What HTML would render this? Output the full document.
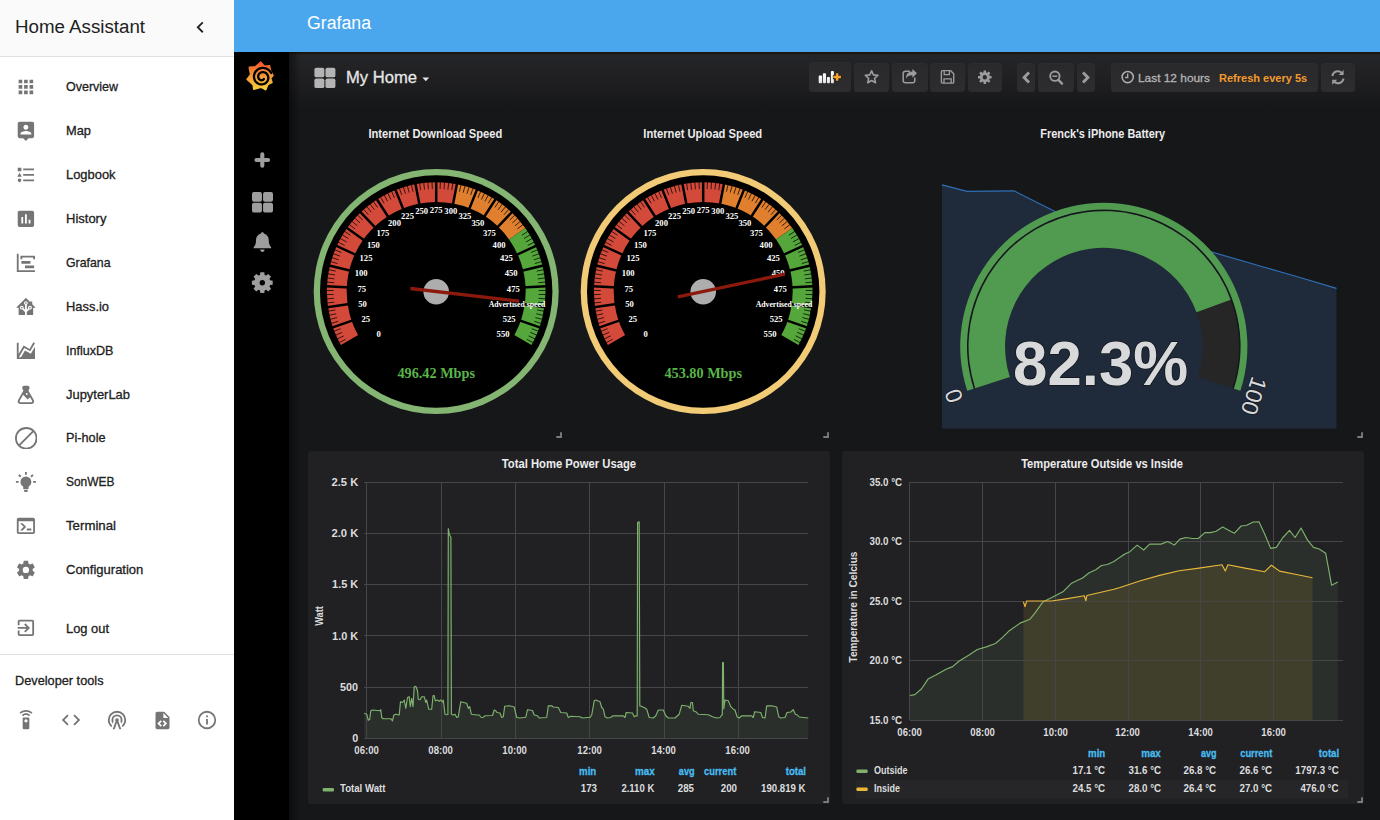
<!DOCTYPE html>
<html lang="en"><head><meta charset="utf-8"><title>Home Assistant - Grafana</title>
<style>
html,body{margin:0;padding:0}
body{width:1380px;height:820px;overflow:hidden;position:relative;background:#161719;font-family:"Liberation Sans",sans-serif}

#sb{position:absolute;left:0;top:0;width:234px;height:820px;background:#fff;overflow:hidden}
#sbh{position:absolute;left:0;top:0;width:234px;height:56px;background:#fafafa;border-bottom:1px solid #e0e0e0}
.mi{position:absolute;display:block}
#sbd{position:absolute;left:0;top:654px;width:234px;height:1px;background:#e0e0e0}

#hatb{position:absolute;left:234px;top:0;width:1146px;height:52px;background:#4aa7ee}
#gsm{position:absolute;left:234px;top:52px;width:55px;height:768px;background:#000}
#gsmsh{position:absolute;left:289px;top:52px;width:12px;height:768px;background:linear-gradient(90deg,rgba(0,0,0,.45),rgba(0,0,0,0))}
#gnav{position:absolute;left:289px;top:52px;width:1091px;height:56px;background:linear-gradient(180deg,#1a140e 0,#1c160f 1.4px,#242528 2.6px,#202022 25px,#161719 56px)}
#chsvg{position:absolute;left:0;top:0}
.t{position:absolute;white-space:nowrap}

#gsvg{position:absolute;left:0;top:0}

.pn{position:absolute;background:#212124;border-radius:3px}
#lrow{position:absolute;left:855.5px;top:780px;width:492.5px;height:17.5px;background:#262628}
#grsvg{position:absolute;left:0;top:0}
</style></head>
<body>
<div id="hatb"></div>
<div id="gnav"></div>
<div id="gsm"></div><div id="gsmsh"></div>
<svg id="chsvg" width="1380" height="820" viewBox="0 0 1380 820">
<defs><linearGradient id="glg" x1="0" y1="0" x2="0" y2="1"><stop offset="0" stop-color="#f0542a"/><stop offset="0.45" stop-color="#f39433"/><stop offset="1" stop-color="#f8d13a"/></linearGradient></defs><polygon points="260.73,61.85 264.39,66.00 269.76,65.51 270.49,70.39 273.17,75.51 270.83,78.20 272.20,82.59 267.90,84.78 265.85,89.90 260.98,87.32 253.66,89.41 252.93,84.78 246.83,79.41 250.49,74.54 249.02,67.22 255.61,66.49" fill="url(#glg)" stroke="url(#glg)" stroke-width="1.2" stroke-linejoin="round"/><path d="M271.26,72.99 L270.59,71.94 L269.79,70.98 L268.89,70.14 L267.90,69.42 L266.84,68.84 L265.72,68.40 L264.57,68.11 L263.40,67.97 L262.23,67.97 L261.08,68.13 L259.97,68.42 L258.91,68.85 L257.93,69.40 L257.03,70.06 L256.23,70.83 L255.54,71.68 L254.97,72.60 L254.53,73.58 L254.21,74.59 L254.03,75.63 L253.98,76.67 L254.06,77.70 L254.26,78.70 L254.59,79.66 L255.03,80.56 L255.58,81.39 L256.22,82.13 L256.94,82.78 L257.73,83.33 L258.57,83.76 L259.45,84.09 L260.35,84.30 L261.26,84.39 L262.17,84.37 L263.06,84.23 L263.91,83.99 L264.71,83.64 L265.46,83.20 L266.13,82.68 L266.73,82.08 L267.24,81.42 L267.65,80.71 L267.97,79.96 L268.19,79.19 L268.31,78.41 L268.32,77.63 L268.24,76.86 L268.07,76.12 L267.80,75.42 L267.46,74.77 L267.04,74.17 L266.55,73.64 L266.01,73.18 L265.43,72.81 L264.81,72.51 L264.16,72.30 L263.51,72.17 L262.86,72.13 L262.21,72.17 L261.59,72.29 L261.00,72.49 L260.44,72.75 L259.94,73.08 L259.49,73.46 L259.09,73.89 L258.77,74.36 L258.51,74.86 L258.32,75.38 L258.20,75.90 L258.14,76.43 L258.16,76.95 L258.24,77.45 L258.39,77.93 L258.59,78.38 L258.84,78.79 L259.13,79.15 L259.46,79.47 L259.82,79.73 L260.20,79.94 L260.60,80.10 L261.01,80.19 L261.41,80.24 L261.80,80.23 L262.18,80.17 L262.54,80.07 L262.88,79.92 L263.18,79.73 L263.45,79.52 L263.68,79.27 L263.87,79.01" fill="none" stroke="#000" stroke-width="2.3" stroke-linecap="round"/>
<path d="M262.3,154.2V165.8M256.5,160H268.1" stroke="#9e9e9e" stroke-width="4.1" stroke-linecap="round" fill="none"/>
<rect x="252.00" y="192.00" width="9.95" height="9.65" rx="1.9" fill="#9e9e9e"/><rect x="252.00" y="202.75" width="9.95" height="9.65" rx="1.9" fill="#9e9e9e"/><rect x="263.05" y="192.00" width="9.95" height="9.65" rx="1.9" fill="#9e9e9e"/><rect x="263.05" y="202.75" width="9.95" height="9.65" rx="1.9" fill="#9e9e9e"/>
<path d="M262.4,232.2c0.9,0,1.5,0.6,1.5,1.4c3,0.8,4.9,3.4,4.9,6.6c0,3.2,0.6,5.4,2.3,6.7v1.4h-17.4v-1.4c1.7,-1.3,2.3,-3.5,2.3,-6.7c0,-3.2,1.9,-5.8,4.9,-6.6c0,-0.8,0.6,-1.4,1.5,-1.4z M260.2,249.6h4.4c0,1.4,-1,2.4,-2.2,2.4c-1.2,0,-2.2,-1,-2.2,-2.4z" fill="#9e9e9e"/>
<path d="M270.06,280.37 L272.71,280.71 L272.71,284.69 L270.06,285.03 L269.43,286.54 L271.07,288.66 L268.26,291.47 L266.14,289.83 L264.63,290.46 L264.29,293.11 L260.31,293.11 L259.97,290.46 L258.46,289.83 L256.34,291.47 L253.53,288.66 L255.17,286.54 L254.54,285.03 L251.89,284.69 L251.89,280.71 L254.54,280.37 L255.17,278.86 L253.53,276.74 L256.34,273.93 L258.46,275.57 L259.97,274.94 L260.31,272.29 L264.29,272.29 L264.63,274.94 L266.14,275.57 L268.26,273.93 L271.07,276.74 L269.43,278.86Z M265.00,282.70 A2.7,2.7 0 1,0 259.60,282.70 A2.7,2.7 0 1,0 265.00,282.70Z" fill="#9e9e9e" fill-rule="evenodd"/>
<rect x="314.40" y="67.70" width="9.95" height="9.65" rx="1.9" fill="#b4b4b4"/><rect x="314.40" y="78.45" width="9.95" height="9.65" rx="1.9" fill="#b4b4b4"/><rect x="325.45" y="67.70" width="9.95" height="9.65" rx="1.9" fill="#b4b4b4"/><rect x="325.45" y="78.45" width="9.95" height="9.65" rx="1.9" fill="#b4b4b4"/>
<path d="M422.4,77.6h6.8l-3.4,3.6z" fill="#e3e3e3"/>
<defs><linearGradient id="btg" x1="0" y1="0" x2="0" y2="1"><stop offset="0" stop-color="#29292c"/><stop offset="1" stop-color="#2d2d30"/></linearGradient></defs>
<rect x="809.5" y="62.5" width="41" height="29" rx="2.5" fill="url(#btg)" stroke="#2c2c2f" stroke-width="1"/>
<rect x="854.5" y="63.5" width="34" height="28" rx="2.5" fill="url(#btg)" stroke="#2c2c2f" stroke-width="1"/>
<rect x="892.5" y="63.5" width="35" height="28" rx="2.5" fill="url(#btg)" stroke="#2c2c2f" stroke-width="1"/>
<rect x="930.5" y="63.5" width="34" height="28" rx="2.5" fill="url(#btg)" stroke="#2c2c2f" stroke-width="1"/>
<rect x="968.5" y="63.5" width="33" height="28" rx="2.5" fill="url(#btg)" stroke="#2c2c2f" stroke-width="1"/>
<rect x="1017.5" y="63.5" width="17" height="28" rx="2.5" fill="url(#btg)" stroke="#2c2c2f" stroke-width="1"/>
<rect x="1038.5" y="63.5" width="35" height="28" rx="2.5" fill="url(#btg)" stroke="#2c2c2f" stroke-width="1"/>
<rect x="1077.5" y="63.5" width="17" height="28" rx="2.5" fill="url(#btg)" stroke="#2c2c2f" stroke-width="1"/>
<rect x="1111.5" y="63.5" width="206" height="28" rx="2.5" fill="url(#btg)" stroke="#2c2c2f" stroke-width="1"/>
<rect x="1321.5" y="63.5" width="33" height="28" rx="2.5" fill="url(#btg)" stroke="#2c2c2f" stroke-width="1"/>
<defs><linearGradient id="barg" x1="0" y1="0" x2="0" y2="1"><stop offset="0" stop-color="#fff"/><stop offset="1" stop-color="#e2e2e2"/></linearGradient></defs>
<rect x="818.7" y="75.6" width="3.4" height="7.60" rx="0.9" fill="url(#barg)"/>
<rect x="822.9" y="73.2" width="3.1" height="10.00" rx="0.9" fill="url(#barg)"/>
<rect x="826.9" y="77" width="3.0" height="6.20" rx="0.9" fill="url(#barg)"/>
<rect x="830.9" y="71.1" width="3.0" height="12.10" rx="0.9" fill="url(#barg)"/>
<path d="M837.1,72.9V81.2M832.9,77.05H841.3" stroke="#1e1e20" stroke-width="4.2" fill="none"/>
<path d="M837.1,73.3V80.8M833.3,77.05H840.9" stroke="#f5a32a" stroke-width="2.5" fill="none"/>
<polygon points="871.60,70.80 873.42,74.89 877.88,75.36 874.55,78.36 875.48,82.74 871.60,80.50 867.72,82.74 868.65,78.36 865.32,75.36 869.78,74.89" fill="none" stroke="#9c9c9c" stroke-width="1.6" stroke-linejoin="round"/>
<path d="M909.5,71.2h-4a2.3,2.3 0 0,0 -2.3,2.3v7a2.3,2.3 0 0,0 2.3,2.3h7a2.3,2.3 0 0,0 2.3,-2.3v-2.6" fill="none" stroke="#9c9c9c" stroke-width="1.5" stroke-linecap="round"/>
<path d="M917,73.3l-4.6,-4.4v2.6c-4,0.1,-6.3,2.3,-6.5,7.3c1.4,-2.6,3.3,-3.5,6.5,-3.5v2.5z" fill="#9c9c9c"/>
<path d="M942.2,70.6h8.3l3.2,3.2v8.5a0.8,0.8 0 0,1 -0.8,0.8h-10.7a0.8,0.8 0 0,1 -0.8,-0.8v-10.9a0.8,0.8 0 0,1 0.8,-0.8z" fill="none" stroke="#9c9c9c" stroke-width="1.4" stroke-linejoin="round"/>
<path d="M944.2,70.8v3.9h5.2v-3.9M944,83v-4.2h7.2v4.2" fill="none" stroke="#9c9c9c" stroke-width="1.3"/>
<path d="M989.62,75.88 L991.60,76.01 L991.60,78.39 L989.62,78.52 L989.15,79.67 L990.45,81.17 L988.77,82.85 L987.27,81.55 L986.12,82.02 L985.99,84.00 L983.61,84.00 L983.48,82.02 L982.33,81.55 L980.83,82.85 L979.15,81.17 L980.45,79.67 L979.98,78.52 L978.00,78.39 L978.00,76.01 L979.98,75.88 L980.45,74.73 L979.15,73.23 L980.83,71.55 L982.33,72.85 L983.48,72.38 L983.61,70.40 L985.99,70.40 L986.12,72.38 L987.27,72.85 L988.77,71.55 L990.45,73.23 L989.15,74.73Z M987.00,77.20 A2.2,2.2 0 1,0 982.60,77.20 A2.2,2.2 0 1,0 987.00,77.20Z" fill="#9c9c9c" fill-rule="evenodd"/>
<path d="M1029,72.6l-4.9,5l4.9,5" fill="none" stroke="#9c9c9c" stroke-width="2.9"/>
<path d="M1083,72.6l4.9,5l-4.9,5" fill="none" stroke="#9c9c9c" stroke-width="2.9"/>
<circle cx="1054.9" cy="76.2" r="4.7" fill="none" stroke="#9c9c9c" stroke-width="1.9"/><path d="M1058.4,79.9l3.6,3.7" stroke="#9c9c9c" stroke-width="2.4" stroke-linecap="round"/><path d="M1052.5,76.2h4.8" stroke="#9c9c9c" stroke-width="1.5"/>
<circle cx="1127.7" cy="77.1" r="5.6" fill="none" stroke="#b0b0b0" stroke-width="1.5"/><path d="M1127.7,73.6v3.9h-2.6" fill="none" stroke="#b0b0b0" stroke-width="1.3"/>
<path d="M1332.3,76a5.6,5.6 0 0,1 9.6,-2.9" fill="none" stroke="#9c9c9c" stroke-width="2"/><path d="M1343.6,69.9v5h-5z" fill="#9c9c9c"/>
<path d="M1343.5,78.6a5.6,5.6 0 0,1 -9.6,2.9" fill="none" stroke="#9c9c9c" stroke-width="2"/><path d="M1332.2,84.7v-5h5z" fill="#9c9c9c"/>
</svg>
<div class="t" style="left:307.30px;top:10.80px;font-size:17.6px;line-height:25px;color:#fff;transform-origin:0 50%;transform:scaleX(1.0065);">Grafana</div>
<div class="t" style="left:345.80px;top:64.90px;font-size:17.4px;line-height:24px;color:#e6e6e6;transform-origin:0 50%;transform:scaleX(0.9538);-webkit-text-stroke:0.3px #e6e6e6;">My Home</div>
<div class="t" style="left:1137.60px;top:69.90px;font-size:11.8px;line-height:17px;color:#b4b4b4;transform-origin:0 50%;transform:scaleX(1.0070);-webkit-text-stroke:0.3px #b4b4b4;">Last 12 hours</div>
<div class="t" style="left:1218.80px;top:69.90px;font-size:11.8px;line-height:17px;color:#f39a2c;font-weight:700;transform-origin:0 50%;transform:scaleX(0.9338);">Refresh every 5s</div>
<div class="pn" style="left:308px;top:451px;width:522px;height:353px"></div><div class="pn" style="left:842px;top:451px;width:522px;height:353px"></div><div id="lrow"></div>
<svg id="gsvg" width="1380" height="820" viewBox="0 0 1380 820">
<circle cx="436.2" cy="291.5" r="122.5" fill="#85b572"/>
<circle cx="436.2" cy="291.5" r="116.2" fill="#000"/>
<path d="M341.54,346.15A109.3,109.3 0 0,1 456.89,184.18L453.14,203.62A89.5,89.5 0 0,0 358.69,336.25Z" fill="#d44a3a"/>
<path d="M456.89,184.18A109.3,109.3 0 0,1 525.23,228.10L509.10,239.58A89.5,89.5 0 0,0 453.14,203.62Z" fill="#e0802f"/>
<path d="M525.23,228.10A109.3,109.3 0 0,1 530.86,346.15L513.71,336.25A89.5,89.5 0 0,0 509.10,239.58Z" fill="#55a73b"/>
<path d="M339.27,342.65L345.55,339.33M337.39,338.92L343.79,335.85M335.66,335.12L342.17,332.30M334.07,331.26L340.68,328.69M331.34,323.38L338.13,321.31M330.20,319.36L337.07,317.56M329.22,315.31L336.15,313.76M328.39,311.22L335.37,309.94M327.20,302.96L334.26,302.21M326.84,298.80L333.93,298.33M326.64,294.63L333.74,294.43M326.60,290.46L333.70,290.52M327.00,282.12L334.08,282.73M327.44,277.97L334.48,278.85M328.03,273.84L335.04,274.98M328.78,269.73L335.74,271.14M330.75,261.62L337.58,263.56M331.96,257.63L338.72,259.83M333.33,253.69L339.99,256.14M334.84,249.80L341.41,252.50M338.31,242.21L344.65,245.40M340.26,238.52L346.47,241.95M342.34,234.90L348.42,238.57M344.57,231.37L350.50,235.27M349.41,224.57L355.03,228.91M352.02,221.32L357.47,225.86M354.75,218.16L360.03,222.91M357.60,215.12L362.69,220.06M363.64,209.36L368.34,214.68M366.82,206.65L371.32,212.15M370.10,204.07L374.38,209.74M373.48,201.62L377.54,207.44M380.50,197.11L384.11,203.22M384.13,195.06L387.51,201.31M387.84,193.15L390.97,199.52M391.62,191.38L394.51,197.86M399.37,188.27L401.75,194.96M403.33,186.95L405.46,193.72M407.33,185.77L409.20,192.62M411.38,184.75L412.98,191.66M419.57,183.17L420.65,190.19M423.71,182.61L424.52,189.67M427.86,182.22L428.40,189.30M432.03,181.98L432.30,189.07M440.37,181.98L440.10,189.07M444.54,182.22L444.00,189.30M448.69,182.61L447.88,189.67M452.83,183.17L451.75,190.19M461.02,184.75L459.42,191.66M465.07,185.77L463.20,192.62M469.07,186.95L466.94,193.72M473.03,188.27L470.65,194.96M480.78,191.38L477.89,197.86M484.56,193.15L481.43,199.52M488.27,195.06L484.89,201.31M491.90,197.11L488.29,203.22M498.92,201.62L494.86,207.44M502.30,204.07L498.02,209.74M505.58,206.65L501.08,212.15M508.76,209.36L504.06,214.68M514.80,215.12L509.71,220.06M517.65,218.16L512.37,222.91M520.38,221.32L514.93,225.86M522.99,224.57L517.37,228.91M527.83,231.37L521.90,235.27M530.06,234.90L523.98,238.57M532.14,238.52L525.93,241.95M534.09,242.21L527.75,245.40M537.56,249.80L530.99,252.50M539.07,253.69L532.41,256.14M540.44,257.63L533.68,259.83M541.65,261.62L534.82,263.56M543.62,269.73L536.66,271.14M544.37,273.84L537.36,274.98M544.96,277.97L537.92,278.85M545.40,282.12L538.32,282.73M545.80,290.46L538.70,290.52M545.76,294.63L538.66,294.43M545.56,298.80L538.47,298.33M545.20,302.96L538.14,302.21M544.01,311.22L537.03,309.94M543.18,315.31L536.25,313.76M542.20,319.36L535.33,317.56M541.06,323.38L534.27,321.31M538.33,331.26L531.72,328.69M536.74,335.12L530.23,332.30M535.01,338.92L528.61,335.85M533.13,342.65L526.85,339.33" stroke="#000" stroke-opacity="0.75" stroke-width="1" fill="none"/>
<path d="M340.68,346.65L361.81,334.45M331.97,327.58L355.02,319.60M327.02,307.20L351.17,303.72M326.02,286.25L350.40,287.41M329.01,265.50L352.72,271.25M335.87,245.68L358.06,255.82M346.35,227.52L366.23,241.67M360.08,211.67L376.92,229.33M376.57,198.71L389.76,219.24M395.21,189.10L404.27,211.75M415.33,183.19L419.94,207.15M436.20,181.20L436.20,205.60M457.07,183.19L452.46,207.15M477.19,189.10L468.13,211.75M495.83,198.71L482.64,219.24M512.32,211.67L495.48,229.33M536.53,245.68L514.34,255.82M543.39,265.50L519.68,271.25M546.38,286.25L522.00,287.41M545.38,307.20L521.23,303.72M540.43,327.58L517.38,319.60M531.72,346.65L510.59,334.45" stroke="#000" stroke-width="2.5" fill="none"/>
<g font-family="Liberation Serif, serif" font-weight="700" font-size="8.6" fill="#fff" text-anchor="middle">
<text x="378.61" y="336.75">0</text>
<text x="365.80" y="322.48">25</text>
<text x="362.46" y="307.24">50</text>
<text x="361.78" y="291.57">75</text>
<text x="361.21" y="276.05">100</text>
<text x="366.01" y="261.23">125</text>
<text x="373.34" y="247.65">150</text>
<text x="382.95" y="235.79">175</text>
<text x="394.48" y="226.10">200</text>
<text x="407.52" y="218.91">225</text>
<text x="421.60" y="214.49">250</text>
<text x="436.20" y="213.00">275</text>
<text x="450.80" y="214.49">300</text>
<text x="464.88" y="218.91">325</text>
<text x="477.92" y="226.10">350</text>
<text x="489.45" y="235.79">375</text>
<text x="499.06" y="247.65">400</text>
<text x="506.39" y="261.23">425</text>
<text x="511.19" y="276.05">450</text>
<text x="513.28" y="291.57">475</text>
<text x="516.97" y="307.24" font-size="8.3" textLength="56.6" lengthAdjust="spacingAndGlyphs">Advertised speed</text>
<text x="509.12" y="322.48">525</text>
<text x="503.03" y="336.75">550</text>
</g>
<text x="436.2" y="378.1" font-family="Liberation Serif, serif" font-weight="700" font-size="15.6" fill="#5ab54a" text-anchor="middle" textLength="77.5" lengthAdjust="spacingAndGlyphs">496.42 Mbps</text>
<circle cx="436.2" cy="291.8" r="12.8" fill="#adadad"/>
<path d="M410.37,288.50L519.14,301.13" stroke="#8c1a0c" stroke-width="3.3" fill="none"/>
<circle cx="703.2" cy="291.5" r="122.5" fill="#f2cb76"/>
<circle cx="703.2" cy="291.5" r="116.2" fill="#000"/>
<path d="M608.54,346.15A109.3,109.3 0 0,1 723.89,184.18L720.14,203.62A89.5,89.5 0 0,0 625.69,336.25Z" fill="#d44a3a"/>
<path d="M723.89,184.18A109.3,109.3 0 0,1 792.23,228.10L776.10,239.58A89.5,89.5 0 0,0 720.14,203.62Z" fill="#e0802f"/>
<path d="M792.23,228.10A109.3,109.3 0 0,1 797.86,346.15L780.71,336.25A89.5,89.5 0 0,0 776.10,239.58Z" fill="#55a73b"/>
<path d="M606.27,342.65L612.55,339.33M604.39,338.92L610.79,335.85M602.66,335.12L609.17,332.30M601.07,331.26L607.68,328.69M598.34,323.38L605.13,321.31M597.20,319.36L604.07,317.56M596.22,315.31L603.15,313.76M595.39,311.22L602.37,309.94M594.20,302.96L601.26,302.21M593.84,298.80L600.93,298.33M593.64,294.63L600.74,294.43M593.60,290.46L600.70,290.52M594.00,282.12L601.08,282.73M594.44,277.97L601.48,278.85M595.03,273.84L602.04,274.98M595.78,269.73L602.74,271.14M597.75,261.62L604.58,263.56M598.96,257.63L605.72,259.83M600.33,253.69L606.99,256.14M601.84,249.80L608.41,252.50M605.31,242.21L611.65,245.40M607.26,238.52L613.47,241.95M609.34,234.90L615.42,238.57M611.57,231.37L617.50,235.27M616.41,224.57L622.03,228.91M619.02,221.32L624.47,225.86M621.75,218.16L627.03,222.91M624.60,215.12L629.69,220.06M630.64,209.36L635.34,214.68M633.82,206.65L638.32,212.15M637.10,204.07L641.38,209.74M640.48,201.62L644.54,207.44M647.50,197.11L651.11,203.22M651.13,195.06L654.51,201.31M654.84,193.15L657.97,199.52M658.62,191.38L661.51,197.86M666.37,188.27L668.75,194.96M670.33,186.95L672.46,193.72M674.33,185.77L676.20,192.62M678.38,184.75L679.98,191.66M686.57,183.17L687.65,190.19M690.71,182.61L691.52,189.67M694.86,182.22L695.40,189.30M699.03,181.98L699.30,189.07M707.37,181.98L707.10,189.07M711.54,182.22L711.00,189.30M715.69,182.61L714.88,189.67M719.83,183.17L718.75,190.19M728.02,184.75L726.42,191.66M732.07,185.77L730.20,192.62M736.07,186.95L733.94,193.72M740.03,188.27L737.65,194.96M747.78,191.38L744.89,197.86M751.56,193.15L748.43,199.52M755.27,195.06L751.89,201.31M758.90,197.11L755.29,203.22M765.92,201.62L761.86,207.44M769.30,204.07L765.02,209.74M772.58,206.65L768.08,212.15M775.76,209.36L771.06,214.68M781.80,215.12L776.71,220.06M784.65,218.16L779.37,222.91M787.38,221.32L781.93,225.86M789.99,224.57L784.37,228.91M794.83,231.37L788.90,235.27M797.06,234.90L790.98,238.57M799.14,238.52L792.93,241.95M801.09,242.21L794.75,245.40M804.56,249.80L797.99,252.50M806.07,253.69L799.41,256.14M807.44,257.63L800.68,259.83M808.65,261.62L801.82,263.56M810.62,269.73L803.66,271.14M811.37,273.84L804.36,274.98M811.96,277.97L804.92,278.85M812.40,282.12L805.32,282.73M812.80,290.46L805.70,290.52M812.76,294.63L805.66,294.43M812.56,298.80L805.47,298.33M812.20,302.96L805.14,302.21M811.01,311.22L804.03,309.94M810.18,315.31L803.25,313.76M809.20,319.36L802.33,317.56M808.06,323.38L801.27,321.31M805.33,331.26L798.72,328.69M803.74,335.12L797.23,332.30M802.01,338.92L795.61,335.85M800.13,342.65L793.85,339.33" stroke="#000" stroke-opacity="0.75" stroke-width="1" fill="none"/>
<path d="M607.68,346.65L628.81,334.45M598.97,327.58L622.02,319.60M594.02,307.20L618.17,303.72M593.02,286.25L617.40,287.41M596.01,265.50L619.72,271.25M602.87,245.68L625.06,255.82M613.35,227.52L633.23,241.67M627.08,211.67L643.92,229.33M643.57,198.71L656.76,219.24M662.21,189.10L671.27,211.75M682.33,183.19L686.94,207.15M703.20,181.20L703.20,205.60M724.07,183.19L719.46,207.15M744.19,189.10L735.13,211.75M762.83,198.71L749.64,219.24M779.32,211.67L762.48,229.33M803.53,245.68L781.34,255.82M810.39,265.50L786.68,271.25M813.38,286.25L789.00,287.41M812.38,307.20L788.23,303.72M807.43,327.58L784.38,319.60M798.72,346.65L777.59,334.45" stroke="#000" stroke-width="2.5" fill="none"/>
<g font-family="Liberation Serif, serif" font-weight="700" font-size="8.6" fill="#fff" text-anchor="middle">
<text x="645.61" y="336.75">0</text>
<text x="632.80" y="322.48">25</text>
<text x="629.46" y="307.24">50</text>
<text x="628.78" y="291.57">75</text>
<text x="628.21" y="276.05">100</text>
<text x="633.01" y="261.23">125</text>
<text x="640.34" y="247.65">150</text>
<text x="649.95" y="235.79">175</text>
<text x="661.48" y="226.10">200</text>
<text x="674.52" y="218.91">225</text>
<text x="688.60" y="214.49">250</text>
<text x="703.20" y="213.00">275</text>
<text x="717.80" y="214.49">300</text>
<text x="731.88" y="218.91">325</text>
<text x="744.92" y="226.10">350</text>
<text x="756.45" y="235.79">375</text>
<text x="766.06" y="247.65">400</text>
<text x="773.39" y="261.23">425</text>
<text x="778.19" y="276.05">450</text>
<text x="780.28" y="291.57">475</text>
<text x="783.97" y="307.24" font-size="8.3" textLength="56.6" lengthAdjust="spacingAndGlyphs">Advertised speed</text>
<text x="776.12" y="322.48">525</text>
<text x="770.03" y="336.75">550</text>
</g>
<text x="703.2" y="378.1" font-family="Liberation Serif, serif" font-weight="700" font-size="15.6" fill="#5ab54a" text-anchor="middle" textLength="77.5" lengthAdjust="spacingAndGlyphs">453.80 Mbps</text>
<circle cx="703.2" cy="291.8" r="12.8" fill="#adadad"/>
<path d="M677.77,296.90L784.88,274.17" stroke="#8c1a0c" stroke-width="3.3" fill="none"/>
<path d="M942,428.5L942.0,184.8 L967.0,191.3 L1014.0,190.8 L1055.0,211.5 L1120.0,228.0 L1198.0,248.0 L1260.0,266.0 L1300.0,277.5 L1336.5,288.3L1336.5,428.5Z" fill="#1f2a3a"/>
<path d="M942.0,184.8 L967.0,191.3 L1014.0,190.8 L1055.0,211.5 L1120.0,228.0 L1198.0,248.0 L1260.0,266.0 L1300.0,277.5 L1336.5,288.3" fill="none" stroke="#2f6fb5" stroke-width="1.2"/>
<path d="M973.51,388.74A137.0,137.0 0 1,1 1234.09,388.74L1232.19,388.12A135.0,135.0 0 1,0 975.41,388.12Z" fill="#15171c"/>
<path d="M967.23,390.77A143.6,143.6 0 1,1 1240.37,390.77L1233.90,388.67A136.8,136.8 0 1,0 973.70,388.67Z" fill="#519b51"/>
<path d="M975.22,388.18A135.2,135.2 0 1,1 1232.38,388.18L1197.76,376.93A98.8,98.8 0 1,0 1009.84,376.93Z" fill="#262626"/>
<path d="M975.22,388.18A135.2,135.2 0 0,1 1230.66,299.64L1196.50,312.23A98.8,98.8 0 0,0 1009.84,376.93Z" fill="#519b51"/>
<text x="1100.6" y="385.2" font-family="Liberation Sans, sans-serif" font-weight="700" font-size="62.5" fill="#d8d9da" stroke="#15181d" stroke-width="1.6" paint-order="stroke" text-anchor="middle" textLength="175" lengthAdjust="spacingAndGlyphs">82.3%</text>
<text transform="translate(953.44,396.06) rotate(252.0)" x="0" y="8.2" font-family="Liberation Sans, sans-serif" font-size="23" fill="#d8d9da" stroke="#15181d" stroke-width="1.4" paint-order="stroke" text-anchor="middle">0</text>
<text transform="translate(1254.16,396.06) rotate(468.0)" x="0" y="8.2" font-family="Liberation Sans, sans-serif" font-size="23" fill="#d8d9da" stroke="#15181d" stroke-width="1.4" paint-order="stroke" text-anchor="middle">100</text>
<path d="M556.3,437H561V432.2" fill="none" stroke="#7b7b7d" stroke-width="1.9"/>
<path d="M823.3,437H828V432.2" fill="none" stroke="#7b7b7d" stroke-width="1.9"/>
<path d="M1357.3,437H1362V432.2" fill="none" stroke="#7b7b7d" stroke-width="1.9"/>
<path d="M823.3,802H828V797.2" fill="none" stroke="#7b7b7d" stroke-width="1.9"/>
<path d="M1357.3,802H1362V797.2" fill="none" stroke="#7b7b7d" stroke-width="1.9"/>
</svg><div class="t" style="left:361.30px;top:125.50px;font-size:12.4px;line-height:17px;color:#ececec;font-weight:700;transform-origin:50% 50%;transform:scaleX(0.9005);">Internet Download Speed</div><div class="t" style="left:636.71px;top:125.50px;font-size:12.4px;line-height:17px;color:#ececec;font-weight:700;transform-origin:50% 50%;transform:scaleX(0.9044);">Internet Upload Speed</div><div class="t" style="left:1032.27px;top:125.50px;font-size:12.4px;line-height:17px;color:#ececec;font-weight:700;transform-origin:50% 50%;transform:scaleX(0.8837);">Frenck's iPhone Battery</div>
<svg id="grsvg" width="1380" height="820" viewBox="0 0 1380 820">
<path d="M364.2,713.3 L366.7,714.2 L368.3,720.3 L369.7,719.2 L370.8,710.8 L372.5,710.0 L380.0,710.8 L380.8,709.7 L381.7,717.5 L383.3,718.7 L390.8,718.7 L392.5,720.8 L393.8,715.0 L395.8,714.2 L399.2,715.0 L400.5,701.7 L402.5,702.5 L404.2,700.0 L405.8,708.3 L407.5,697.5 L409.2,696.7 L410.3,706.7 L411.7,698.3 L413.0,706.7 L414.2,686.7 L415.8,686.3 L417.5,690.8 L418.3,699.2 L420.0,699.7 L421.7,696.7 L424.2,696.7 L425.8,702.5 L426.7,700.0 L428.7,709.2 L431.7,709.2 L433.0,695.8 L434.2,695.5 L435.3,700.8 L437.5,700.0 L439.2,701.3 L440.8,700.0 L442.5,702.0 L443.3,700.0 L445.0,714.2 L446.7,714.7 L447.9,714.5 L448.3,528.6 L449.4,534.5 L450.9,537.2 L451.4,714.0 L451.3,714.2 L453.3,715.0 L455.0,714.2 L456.7,717.5 L458.3,716.7 L460.8,701.7 L466.7,703.3 L468.3,708.3 L469.7,706.7 L471.3,714.2 L476.7,715.0 L479.2,715.0 L481.3,717.5 L483.3,717.2 L485.0,715.8 L492.5,715.5 L494.2,710.0 L495.8,710.8 L497.0,712.5 L500.0,713.0 L501.7,717.5 L503.3,716.7 L504.7,706.3 L509.2,705.8 L514.2,707.0 L516.7,717.5 L520.0,718.0 L525.8,717.2 L527.5,709.7 L532.5,710.5 L534.2,715.0 L537.5,715.8 L539.2,718.0 L546.7,717.5 L548.3,705.8 L551.7,705.8 L553.3,707.0 L558.3,707.5 L560.8,712.5 L566.7,713.0 L568.3,717.5 L570.8,716.3 L580.0,716.7 L582.5,718.0 L590.0,717.2 L590.0,717.5 L591.7,715.0 L594.2,700.8 L595.8,700.0 L600.0,701.7 L601.7,707.5 L603.3,709.2 L605.0,716.7 L607.5,718.0 L610.8,717.5 L612.5,715.8 L623.3,715.8 L625.0,717.5 L626.2,712.5 L632.5,713.0 L634.2,716.7 L635.8,715.8 L637.2,716.0 L637.6,522.5 L639.2,521.8 L639.8,706.0 L640.0,705.8 L644.2,707.5 L646.7,709.2 L649.2,717.5 L653.3,718.0 L655.8,715.8 L658.3,710.0 L663.3,710.0 L665.8,715.8 L668.3,718.0 L675.0,718.0 L679.2,714.2 L681.7,705.3 L688.3,706.3 L690.0,708.3 L690.8,702.5 L692.5,702.5 L693.3,710.8 L695.8,711.7 L698.3,714.2 L708.3,714.7 L712.5,716.7 L716.7,718.0 L720.0,717.5 L721.7,715.0 L722.3,715.0 L722.6,662.6 L723.4,662.6 L723.8,709.0 L725.0,700.0 L728.3,700.8 L730.8,706.7 L733.3,709.2 L735.0,710.0 L737.0,716.7 L739.2,718.0 L741.7,715.8 L751.7,715.8 L753.3,717.5 L754.7,711.7 L760.8,712.5 L762.5,717.5 L765.0,718.0 L766.7,705.8 L771.7,705.8 L776.7,707.0 L778.7,716.7 L780.8,718.0 L785.0,717.5 L787.0,712.5 L790.8,712.0 L793.3,709.7 L795.3,714.2 L797.5,715.0 L799.2,717.0 L803.3,717.5 L808.3,718.0L808.3,738.4L364.2,738.4Z" fill="#7eb26d" fill-opacity="0.1"/>
<path d="M363.8,482.0H808.4M363.8,533.3H808.4M363.8,584.6H808.4M363.8,635.8H808.4M363.8,687.1H808.4M363.8,738.4H808.4M366.9,482.0V738.4M441.2,482.0V738.4M515.5,482.0V738.4M589.8,482.0V738.4M664.1,482.0V738.4M738.4,482.0V738.4" stroke="#464648" stroke-width="1" fill="none" shape-rendering="crispEdges"/>
<path d="M364.2,713.3 L366.7,714.2 L368.3,720.3 L369.7,719.2 L370.8,710.8 L372.5,710.0 L380.0,710.8 L380.8,709.7 L381.7,717.5 L383.3,718.7 L390.8,718.7 L392.5,720.8 L393.8,715.0 L395.8,714.2 L399.2,715.0 L400.5,701.7 L402.5,702.5 L404.2,700.0 L405.8,708.3 L407.5,697.5 L409.2,696.7 L410.3,706.7 L411.7,698.3 L413.0,706.7 L414.2,686.7 L415.8,686.3 L417.5,690.8 L418.3,699.2 L420.0,699.7 L421.7,696.7 L424.2,696.7 L425.8,702.5 L426.7,700.0 L428.7,709.2 L431.7,709.2 L433.0,695.8 L434.2,695.5 L435.3,700.8 L437.5,700.0 L439.2,701.3 L440.8,700.0 L442.5,702.0 L443.3,700.0 L445.0,714.2 L446.7,714.7 L447.9,714.5 L448.3,528.6 L449.4,534.5 L450.9,537.2 L451.4,714.0 L451.3,714.2 L453.3,715.0 L455.0,714.2 L456.7,717.5 L458.3,716.7 L460.8,701.7 L466.7,703.3 L468.3,708.3 L469.7,706.7 L471.3,714.2 L476.7,715.0 L479.2,715.0 L481.3,717.5 L483.3,717.2 L485.0,715.8 L492.5,715.5 L494.2,710.0 L495.8,710.8 L497.0,712.5 L500.0,713.0 L501.7,717.5 L503.3,716.7 L504.7,706.3 L509.2,705.8 L514.2,707.0 L516.7,717.5 L520.0,718.0 L525.8,717.2 L527.5,709.7 L532.5,710.5 L534.2,715.0 L537.5,715.8 L539.2,718.0 L546.7,717.5 L548.3,705.8 L551.7,705.8 L553.3,707.0 L558.3,707.5 L560.8,712.5 L566.7,713.0 L568.3,717.5 L570.8,716.3 L580.0,716.7 L582.5,718.0 L590.0,717.2 L590.0,717.5 L591.7,715.0 L594.2,700.8 L595.8,700.0 L600.0,701.7 L601.7,707.5 L603.3,709.2 L605.0,716.7 L607.5,718.0 L610.8,717.5 L612.5,715.8 L623.3,715.8 L625.0,717.5 L626.2,712.5 L632.5,713.0 L634.2,716.7 L635.8,715.8 L637.2,716.0 L637.6,522.5 L639.2,521.8 L639.8,706.0 L640.0,705.8 L644.2,707.5 L646.7,709.2 L649.2,717.5 L653.3,718.0 L655.8,715.8 L658.3,710.0 L663.3,710.0 L665.8,715.8 L668.3,718.0 L675.0,718.0 L679.2,714.2 L681.7,705.3 L688.3,706.3 L690.0,708.3 L690.8,702.5 L692.5,702.5 L693.3,710.8 L695.8,711.7 L698.3,714.2 L708.3,714.7 L712.5,716.7 L716.7,718.0 L720.0,717.5 L721.7,715.0 L722.3,715.0 L722.6,662.6 L723.4,662.6 L723.8,709.0 L725.0,700.0 L728.3,700.8 L730.8,706.7 L733.3,709.2 L735.0,710.0 L737.0,716.7 L739.2,718.0 L741.7,715.8 L751.7,715.8 L753.3,717.5 L754.7,711.7 L760.8,712.5 L762.5,717.5 L765.0,718.0 L766.7,705.8 L771.7,705.8 L776.7,707.0 L778.7,716.7 L780.8,718.0 L785.0,717.5 L787.0,712.5 L790.8,712.0 L793.3,709.7 L795.3,714.2 L797.5,715.0 L799.2,717.0 L803.3,717.5 L808.3,718.0" fill="none" stroke="#7eb26d" stroke-width="1.15" stroke-linejoin="round"/>
<rect x="322.7" y="788" width="11.3" height="3.4" rx="1.2" fill="#7eb26d"/>
<path d="M909.9,695.5 L914.8,694.6 L921.4,689.0 L928.0,679.1 L936.2,674.8 L946.1,669.2 L952.6,666.6 L959.2,661.0 L969.1,655.0 L977.3,649.5 L985.6,647.1 L995.4,643.5 L1002.0,637.9 L1008.6,631.3 L1020.1,623.1 L1030.0,619.2 L1034.9,613.2 L1043.1,601.7 L1051.4,597.8 L1062.9,591.8 L1071.1,583.6 L1077.7,580.3 L1082.6,578.0 L1089.2,572.7 L1095.8,569.8 L1101.4,565.5 L1107.3,564.5 L1113.9,561.5 L1123.7,554.6 L1120.0,557.3 L1124.9,554.0 L1129.9,551.7 L1137.1,545.1 L1143.7,550.0 L1149.6,544.1 L1161.1,544.1 L1167.7,541.5 L1174.3,545.1 L1179.9,539.1 L1185.8,537.5 L1192.4,538.5 L1198.3,538.5 L1204.9,532.6 L1210.5,532.6 L1216.1,531.2 L1222.7,527.0 L1228.6,530.3 L1234.5,533.2 L1241.1,526.0 L1246.7,525.3 L1253.3,522.0 L1258.9,521.7 L1264.8,534.2 L1270.7,548.4 L1276.3,547.4 L1282.9,537.5 L1289.5,530.3 L1295.1,537.5 L1301.0,528.0 L1307.6,540.1 L1313.5,547.4 L1319.1,549.0 L1325.7,553.3 L1331.6,585.2 L1337.8,582.0L1337.8,720.2L909.9,720.2Z" fill="#7eb26d" fill-opacity="0.1"/>
<path d="M1023.4,601.7 L1025.0,606.6 L1026.7,601.0 L1051.4,601.0 L1064.5,599.1 L1084.3,595.8 L1085.9,600.7 L1086.9,595.5 L1113.9,589.2 L1120.0,587.5 L1139.7,581.0 L1159.5,575.4 L1179.2,570.8 L1199.0,568.1 L1222.0,564.8 L1225.3,571.1 L1227.9,564.8 L1245.0,568.1 L1264.8,571.7 L1271.4,565.2 L1279.6,571.1 L1297.7,574.7 L1312.5,577.7L1312.5,720.2L1023.4,720.2Z" fill="#eab839" fill-opacity="0.12"/>
<path d="M909.8,482.0H1342.5M909.8,541.55H1342.5M909.8,601.1H1342.5M909.8,660.65H1342.5M909.8,720.2H1342.5M909.8,482.0V720.2M982.5,482.0V720.2M1055.2,482.0V720.2M1128.0,482.0V720.2M1200.7,482.0V720.2M1273.4,482.0V720.2" stroke="#464648" stroke-width="1" fill="none" shape-rendering="crispEdges"/>
<path d="M909.9,695.5 L914.8,694.6 L921.4,689.0 L928.0,679.1 L936.2,674.8 L946.1,669.2 L952.6,666.6 L959.2,661.0 L969.1,655.0 L977.3,649.5 L985.6,647.1 L995.4,643.5 L1002.0,637.9 L1008.6,631.3 L1020.1,623.1 L1030.0,619.2 L1034.9,613.2 L1043.1,601.7 L1051.4,597.8 L1062.9,591.8 L1071.1,583.6 L1077.7,580.3 L1082.6,578.0 L1089.2,572.7 L1095.8,569.8 L1101.4,565.5 L1107.3,564.5 L1113.9,561.5 L1123.7,554.6 L1120.0,557.3 L1124.9,554.0 L1129.9,551.7 L1137.1,545.1 L1143.7,550.0 L1149.6,544.1 L1161.1,544.1 L1167.7,541.5 L1174.3,545.1 L1179.9,539.1 L1185.8,537.5 L1192.4,538.5 L1198.3,538.5 L1204.9,532.6 L1210.5,532.6 L1216.1,531.2 L1222.7,527.0 L1228.6,530.3 L1234.5,533.2 L1241.1,526.0 L1246.7,525.3 L1253.3,522.0 L1258.9,521.7 L1264.8,534.2 L1270.7,548.4 L1276.3,547.4 L1282.9,537.5 L1289.5,530.3 L1295.1,537.5 L1301.0,528.0 L1307.6,540.1 L1313.5,547.4 L1319.1,549.0 L1325.7,553.3 L1331.6,585.2 L1337.8,582.0" fill="none" stroke="#7eb26d" stroke-width="1.15" stroke-linejoin="round"/>
<path d="M1023.4,601.7 L1025.0,606.6 L1026.7,601.0 L1051.4,601.0 L1064.5,599.1 L1084.3,595.8 L1085.9,600.7 L1086.9,595.5 L1113.9,589.2 L1120.0,587.5 L1139.7,581.0 L1159.5,575.4 L1179.2,570.8 L1199.0,568.1 L1222.0,564.8 L1225.3,571.1 L1227.9,564.8 L1245.0,568.1 L1264.8,571.7 L1271.4,565.2 L1279.6,571.1 L1297.7,574.7 L1312.5,577.7" fill="none" stroke="#eab839" stroke-width="1.15" stroke-linejoin="round"/>
<rect x="856.4" y="769.6" width="11.3" height="3.4" rx="1.2" fill="#7eb26d"/>
<rect x="856.4" y="787.6" width="11.3" height="3.4" rx="1.2" fill="#eab839"/>
</svg><div class="t" style="left:495.05px;top:455.50px;font-size:12.4px;line-height:17px;color:#ececec;font-weight:700;transform-origin:50% 50%;transform:scaleX(0.9093);">Total Home Power Usage</div><div class="t" style="left:331.15px;top:473.70px;font-size:11.4px;line-height:16px;color:#dcddde;font-weight:700;transform-origin:100% 50%;transform:scaleX(0.9836);">2.5 K</div><div class="t" style="left:331.15px;top:525.00px;font-size:11.4px;line-height:16px;color:#dcddde;font-weight:700;transform-origin:100% 50%;transform:scaleX(0.9836);">2.0 K</div><div class="t" style="left:331.15px;top:576.30px;font-size:11.4px;line-height:16px;color:#dcddde;font-weight:700;transform-origin:100% 50%;transform:scaleX(0.9616);">1.5 K</div><div class="t" style="left:331.15px;top:627.50px;font-size:11.4px;line-height:16px;color:#dcddde;font-weight:700;transform-origin:100% 50%;transform:scaleX(0.9616);">1.0 K</div><div class="t" style="left:339.38px;top:678.80px;font-size:11.4px;line-height:16px;color:#dcddde;font-weight:700;transform-origin:100% 50%;transform:scaleX(0.9465);">500</div><div class="t" style="left:352.06px;top:730.10px;font-size:11.4px;line-height:16px;color:#dcddde;font-weight:700;transform-origin:100% 50%;transform:scaleX(0.9465);">0</div><div class="t" style="left:351.72px;top:742.00px;font-size:11.4px;line-height:16px;color:#dcddde;font-weight:700;transform-origin:50% 50%;transform:scaleX(0.8375);">06:00</div><div class="t" style="left:426.02px;top:742.00px;font-size:11.4px;line-height:16px;color:#dcddde;font-weight:700;transform-origin:50% 50%;transform:scaleX(0.8375);">08:00</div><div class="t" style="left:500.32px;top:742.00px;font-size:11.4px;line-height:16px;color:#dcddde;font-weight:700;transform-origin:50% 50%;transform:scaleX(0.8375);">10:00</div><div class="t" style="left:574.62px;top:742.00px;font-size:11.4px;line-height:16px;color:#dcddde;font-weight:700;transform-origin:50% 50%;transform:scaleX(0.8375);">12:00</div><div class="t" style="left:648.92px;top:742.00px;font-size:11.4px;line-height:16px;color:#dcddde;font-weight:700;transform-origin:50% 50%;transform:scaleX(0.8375);">14:00</div><div class="t" style="left:723.22px;top:742.00px;font-size:11.4px;line-height:16px;color:#dcddde;font-weight:700;transform-origin:50% 50%;transform:scaleX(0.8375);">16:00</div><div class="t" style="left:307.17px;top:608.00px;font-size:11.4px;line-height:16px;color:#dcddde;font-weight:700;transform-origin:50% 50%;transform:rotate(-90deg) scaleX(0.8116);">Watt</div><div class="t" style="left:576.33px;top:763.30px;font-size:11.4px;line-height:16px;color:#48bdf0;font-weight:700;transform-origin:100% 50%;transform:scaleX(0.8487);-webkit-text-stroke:0.3px #48bdf0;">min</div><div class="t" style="left:631.68px;top:763.30px;font-size:11.4px;line-height:16px;color:#48bdf0;font-weight:700;transform-origin:100% 50%;transform:scaleX(0.8634);-webkit-text-stroke:0.3px #48bdf0;">max</div><div class="t" style="left:674.76px;top:763.30px;font-size:11.4px;line-height:16px;color:#48bdf0;font-weight:700;transform-origin:100% 50%;transform:scaleX(0.8044);-webkit-text-stroke:0.3px #48bdf0;">avg</div><div class="t" style="left:697.43px;top:763.30px;font-size:11.4px;line-height:16px;color:#48bdf0;font-weight:700;transform-origin:100% 50%;transform:scaleX(0.8224);-webkit-text-stroke:0.3px #48bdf0;">current</div><div class="t" style="left:781.54px;top:763.30px;font-size:11.4px;line-height:16px;color:#48bdf0;font-weight:700;transform-origin:100% 50%;transform:scaleX(0.8437);-webkit-text-stroke:0.3px #48bdf0;">total</div><div class="t" style="left:577.58px;top:780.30px;font-size:11.4px;line-height:16px;color:#dcddde;font-weight:700;transform-origin:100% 50%;transform:scaleX(0.8560);">173</div><div class="t" style="left:615.20px;top:780.30px;font-size:11.4px;line-height:16px;color:#dcddde;font-weight:700;transform-origin:100% 50%;transform:scaleX(0.8376);">2.110 K</div><div class="t" style="left:675.38px;top:780.30px;font-size:11.4px;line-height:16px;color:#dcddde;font-weight:700;transform-origin:100% 50%;transform:scaleX(0.8560);">285</div><div class="t" style="left:717.68px;top:780.30px;font-size:11.4px;line-height:16px;color:#dcddde;font-weight:700;transform-origin:100% 50%;transform:scaleX(0.8560);">200</div><div class="t" style="left:753.00px;top:780.30px;font-size:11.4px;line-height:16px;color:#dcddde;font-weight:700;transform-origin:100% 50%;transform:scaleX(0.8458);">190.819 K</div><div class="t" style="left:340.20px;top:780.30px;font-size:11.4px;line-height:16px;color:#dcddde;font-weight:700;transform-origin:0 50%;transform:scaleX(0.8454);">Total Watt</div><div class="t" style="left:1012.35px;top:455.50px;font-size:12.4px;line-height:17px;color:#ececec;font-weight:700;transform-origin:50% 50%;transform:scaleX(0.8985);">Temperature Outside vs Inside</div><div class="t" style="left:863.86px;top:473.70px;font-size:11.4px;line-height:16px;color:#dcddde;font-weight:700;transform-origin:100% 50%;transform:scaleX(0.8560);">35.0 °C</div><div class="t" style="left:863.86px;top:533.25px;font-size:11.4px;line-height:16px;color:#dcddde;font-weight:700;transform-origin:100% 50%;transform:scaleX(0.8560);">30.0 °C</div><div class="t" style="left:863.86px;top:592.80px;font-size:11.4px;line-height:16px;color:#dcddde;font-weight:700;transform-origin:100% 50%;transform:scaleX(0.8560);">25.0 °C</div><div class="t" style="left:863.86px;top:652.35px;font-size:11.4px;line-height:16px;color:#dcddde;font-weight:700;transform-origin:100% 50%;transform:scaleX(0.8560);">20.0 °C</div><div class="t" style="left:863.86px;top:711.90px;font-size:11.4px;line-height:16px;color:#dcddde;font-weight:700;transform-origin:100% 50%;transform:scaleX(0.8560);">15.0 °C</div><div class="t" style="left:895.22px;top:724.00px;font-size:11.4px;line-height:16px;color:#dcddde;font-weight:700;transform-origin:50% 50%;transform:scaleX(0.8375);">06:00</div><div class="t" style="left:967.94px;top:724.00px;font-size:11.4px;line-height:16px;color:#dcddde;font-weight:700;transform-origin:50% 50%;transform:scaleX(0.8375);">08:00</div><div class="t" style="left:1040.66px;top:724.00px;font-size:11.4px;line-height:16px;color:#dcddde;font-weight:700;transform-origin:50% 50%;transform:scaleX(0.8375);">10:00</div><div class="t" style="left:1113.38px;top:724.00px;font-size:11.4px;line-height:16px;color:#dcddde;font-weight:700;transform-origin:50% 50%;transform:scaleX(0.8375);">12:00</div><div class="t" style="left:1186.10px;top:724.00px;font-size:11.4px;line-height:16px;color:#dcddde;font-weight:700;transform-origin:50% 50%;transform:scaleX(0.8375);">14:00</div><div class="t" style="left:1258.82px;top:724.00px;font-size:11.4px;line-height:16px;color:#dcddde;font-weight:700;transform-origin:50% 50%;transform:scaleX(0.8375);">16:00</div><div class="t" style="left:789.99px;top:598.50px;font-size:11.4px;line-height:16px;color:#dcddde;font-weight:700;transform-origin:50% 50%;transform:rotate(-90deg) scaleX(0.8864);">Temperature in Celcius</div><div class="t" style="left:1084.73px;top:744.90px;font-size:11.4px;line-height:16px;color:#48bdf0;font-weight:700;transform-origin:100% 50%;transform:scaleX(0.8487);-webkit-text-stroke:0.3px #48bdf0;">min</div><div class="t" style="left:1138.18px;top:744.90px;font-size:11.4px;line-height:16px;color:#48bdf0;font-weight:700;transform-origin:100% 50%;transform:scaleX(0.8590);-webkit-text-stroke:0.3px #48bdf0;">max</div><div class="t" style="left:1196.56px;top:744.90px;font-size:11.4px;line-height:16px;color:#48bdf0;font-weight:700;transform-origin:100% 50%;transform:scaleX(0.7942);-webkit-text-stroke:0.3px #48bdf0;">avg</div><div class="t" style="left:1232.83px;top:744.90px;font-size:11.4px;line-height:16px;color:#48bdf0;font-weight:700;transform-origin:100% 50%;transform:scaleX(0.8148);-webkit-text-stroke:0.3px #48bdf0;">current</div><div class="t" style="left:1314.84px;top:744.90px;font-size:11.4px;line-height:16px;color:#48bdf0;font-weight:700;transform-origin:100% 50%;transform:scaleX(0.8395);-webkit-text-stroke:0.3px #48bdf0;">total</div><div class="t" style="left:1066.86px;top:761.90px;font-size:11.4px;line-height:16px;color:#dcddde;font-weight:700;transform-origin:100% 50%;transform:scaleX(0.8560);">17.1 °C</div><div class="t" style="left:1122.86px;top:761.90px;font-size:11.4px;line-height:16px;color:#dcddde;font-weight:700;transform-origin:100% 50%;transform:scaleX(0.8560);">31.6 °C</div><div class="t" style="left:1178.06px;top:761.90px;font-size:11.4px;line-height:16px;color:#dcddde;font-weight:700;transform-origin:100% 50%;transform:scaleX(0.8560);">26.8 °C</div><div class="t" style="left:1233.96px;top:761.90px;font-size:11.4px;line-height:16px;color:#dcddde;font-weight:700;transform-origin:100% 50%;transform:scaleX(0.8560);">26.6 °C</div><div class="t" style="left:1288.08px;top:761.90px;font-size:11.4px;line-height:16px;color:#dcddde;font-weight:700;transform-origin:100% 50%;transform:scaleX(0.8560);">1797.3 °C</div><div class="t" style="left:1066.86px;top:779.90px;font-size:11.4px;line-height:16px;color:#dcddde;font-weight:700;transform-origin:100% 50%;transform:scaleX(0.8560);">24.5 °C</div><div class="t" style="left:1122.86px;top:779.90px;font-size:11.4px;line-height:16px;color:#dcddde;font-weight:700;transform-origin:100% 50%;transform:scaleX(0.8560);">28.0 °C</div><div class="t" style="left:1178.06px;top:779.90px;font-size:11.4px;line-height:16px;color:#dcddde;font-weight:700;transform-origin:100% 50%;transform:scaleX(0.8560);">26.4 °C</div><div class="t" style="left:1233.96px;top:779.90px;font-size:11.4px;line-height:16px;color:#dcddde;font-weight:700;transform-origin:100% 50%;transform:scaleX(0.8560);">27.0 °C</div><div class="t" style="left:1294.42px;top:779.90px;font-size:11.4px;line-height:16px;color:#dcddde;font-weight:700;transform-origin:100% 50%;transform:scaleX(0.8560);">476.0 °C</div><div class="t" style="left:873.70px;top:761.90px;font-size:11.4px;line-height:16px;color:#dcddde;font-weight:700;transform-origin:0 50%;transform:scaleX(0.7925);">Outside</div><div class="t" style="left:873.70px;top:779.90px;font-size:11.4px;line-height:16px;color:#dcddde;font-weight:700;transform-origin:0 50%;transform:scaleX(0.7905);">Inside</div>
<div id="sb">
<div id="sbh"></div>
<div class="t" style="left:15.00px;top:15.20px;font-size:18px;line-height:25px;color:#212121;transform-origin:0 50%;transform:scaleX(1.0396);">Home Assistant</div>
<svg class="mi" style="left:188.75px;top:16.05px;width:22.5px;height:22.5px" viewBox="0 0 24 24"><path fill="#212121" d="M15.41,16.58L10.83,12L15.41,7.41L14,6L8,12L14,18L15.41,16.58Z"/></svg>
<svg class="mi" style="left:15.1px;top:76.1px;width:21.8px;height:21.8px" viewBox="0 0 24 24"><path fill="#757575" d="M16,20H20V16H16M16,14H20V10H16M10,8H14V4H10M16,8H20V4H16M10,14H14V10H10M4,14H8V10H4M4,20H8V16H4M10,20H14V16H10M4,8H8V4H4V8Z"/></svg>
<div class="t" style="left:66.00px;top:78.00px;font-size:13px;line-height:18px;color:#212121;transform-origin:0 50%;transform:scaleX(0.9598);-webkit-text-stroke:0.3px #212121;">Overview</div>
<svg class="mi" style="left:15.1px;top:120.1px;width:21.8px;height:21.8px" viewBox="0 0 24 24"><path fill="#757575" d="M18,16H6V15.1C6,13.1 10,12 12,12C14,12 18,13.1 18,15.1M12,5.3C13.5,5.3 14.7,6.5 14.7,8C14.7,9.5 13.5,10.7 12,10.7C10.5,10.7 9.3,9.5 9.3,8C9.3,6.5 10.5,5.3 12,5.3M19,2H5C3.89,2 3,2.89 3,4V18A2,2 0 0,0 5,20H9L12,23L15,20H19A2,2 0 0,0 21,18V4C21,2.89 20.1,2 19,2Z"/></svg>
<div class="t" style="left:66.00px;top:122.00px;font-size:13px;line-height:18px;color:#212121;transform-origin:0 50%;transform:scaleX(0.9886);-webkit-text-stroke:0.3px #212121;">Map</div>
<svg class="mi" style="left:15.1px;top:164.1px;width:21.8px;height:21.8px" viewBox="0 0 24 24"><path fill="#757575" d="M5,9.5L7.5,14H2.5L5,9.5M3,4H7V8H3V4M5,20A2,2 0 0,0 7,18A2,2 0 0,0 5,16A2,2 0 0,0 3,18A2,2 0 0,0 5,20M9,5V7H21V5H9M9,19H21V17H9V19M9,13H21V11H9V13Z"/></svg>
<div class="t" style="left:66.00px;top:166.00px;font-size:13px;line-height:18px;color:#212121;transform-origin:0 50%;transform:scaleX(0.9925);-webkit-text-stroke:0.3px #212121;">Logbook</div>
<svg class="mi" style="left:15.1px;top:208.1px;width:21.8px;height:21.8px" viewBox="0 0 24 24"><path fill="#757575" d="M17,17H15V13H17M13,17H11V7H13M9,17H7V10H9M19,3H5C3.89,3 3,3.89 3,5V19A2,2 0 0,0 5,21H19A2,2 0 0,0 21,19V5C21,3.89 20.1,3 19,3Z"/></svg>
<div class="t" style="left:66.00px;top:210.00px;font-size:13px;line-height:18px;color:#212121;-webkit-text-stroke:0.3px #212121;">History</div>
<svg class="mi" style="left:15.1px;top:252.1px;width:21.8px;height:21.8px" viewBox="0 0 24 24"><path fill="#757575" d="M2,2H4V20H22V22H2V2M7,10H17V13H7V10M11,15H21V18H11V15M6,4H22V8H20V6H8V8H6V4Z"/></svg>
<div class="t" style="left:66.00px;top:254.00px;font-size:13px;line-height:18px;color:#212121;transform-origin:0 50%;transform:scaleX(0.9474);-webkit-text-stroke:0.3px #212121;">Grafana</div>
<svg class="mi" style="left:15.1px;top:296.1px;width:21.8px;height:21.8px" viewBox="0 0 24 24"><path fill="#757575" d="M21.8,13H20V21H13V17.67L15.79,14.88L16.5,15C17.66,15 18.6,14.06 18.6,12.9C18.6,11.74 17.66,10.8 16.5,10.8A2.1,2.1 0 0,0 14.4,12.9L14.5,13.61L13,15.13V9.65C13.66,9.29 14.1,8.6 14.1,7.8A2.1,2.1 0 0,0 12,5.7A2.1,2.1 0 0,0 9.9,7.8C9.9,8.6 10.34,9.29 11,9.65V15.13L9.5,13.61L9.6,12.9A2.1,2.1 0 0,0 7.5,10.8A2.1,2.1 0 0,0 5.4,12.9A2.1,2.1 0 0,0 7.5,15L8.21,14.88L11,17.67V21H4V13H2.25C1.83,13 1.42,13 1.42,12.79C1.43,12.57 1.85,12.15 2.28,11.72L11,3C11.33,2.67 11.67,2.33 12,2.33C12.33,2.33 12.67,2.67 13,3L17,7V6H19V9L21.78,11.78C22.18,12.18 22.59,12.59 22.6,12.8C22.6,13 22.2,13 21.8,13M7.5,12A0.9,0.9 0 0,1 8.4,12.9A0.9,0.9 0 0,1 7.5,13.8A0.9,0.9 0 0,1 6.6,12.9A0.9,0.9 0 0,1 7.5,12M16.5,12C17,12 17.4,12.4 17.4,12.9C17.4,13.4 17,13.8 16.5,13.8A0.9,0.9 0 0,1 15.6,12.9A0.9,0.9 0 0,1 16.5,12M12,6.9C12.5,6.9 12.9,7.3 12.9,7.8C12.9,8.3 12.5,8.7 12,8.7C11.5,8.7 11.1,8.3 11.1,7.8C11.1,7.3 11.5,6.9 12,6.9Z"/></svg>
<div class="t" style="left:66.00px;top:298.00px;font-size:13px;line-height:18px;color:#212121;transform-origin:0 50%;transform:scaleX(0.9920);-webkit-text-stroke:0.3px #212121;">Hass.io</div>
<svg class="mi" style="left:15.1px;top:340.1px;width:21.8px;height:21.8px" viewBox="0 0 24 24"><path fill="#757575" d="M17.45,15.18L22,7.31V19L22,21H2V3H4V15.54L9.5,6L16,9.78L20.24,2.45L21.97,3.45L16.74,12.5L10.23,8.75L4.31,19H6.57L10.96,11.44L17.45,15.18Z"/></svg>
<div class="t" style="left:66.00px;top:342.00px;font-size:13px;line-height:18px;color:#212121;transform-origin:0 50%;transform:scaleX(0.9668);-webkit-text-stroke:0.3px #212121;">InfluxDB</div>
<svg class="mi" style="left:15.1px;top:383.6px;width:21.8px;height:21.8px" viewBox="0 0 24 24"><path fill="#757575" d="M6,22A3,3 0 0,1 3,19C3,18.4 3.18,17.84 3.5,17.37L9,7.81V6A1,1 0 0,1 8,5V4A2,2 0 0,1 10,2H14A2,2 0 0,1 16,4V5A1,1 0 0,1 15,6V7.81L20.5,17.37C20.82,17.84 21,18.4 21,19A3,3 0 0,1 18,22H6M5,19A1,1 0 0,0 6,20H18A1,1 0 0,0 19,19C19,18.79 18.93,18.59 18.82,18.43L16.53,14.47L14,17L8.93,11.93L5.18,18.43C5.07,18.59 5,18.79 5,19M13,10A1,1 0 0,0 12,11A1,1 0 0,0 13,12A1,1 0 0,0 14,11A1,1 0 0,0 13,10Z"/></svg>
<div class="t" style="left:66.00px;top:385.50px;font-size:13px;line-height:18px;color:#212121;transform-origin:0 50%;transform:scaleX(0.9951);-webkit-text-stroke:0.3px #212121;">JupyterLab</div>
<svg class="mi" style="left:14.75px;top:426.75px;width:22.5px;height:22.5px" viewBox="0 0 24 24"><path fill="#757575" d="M12,0A12,12 0 0,1 24,12A12,12 0 0,1 12,24A12,12 0 0,1 0,12A12,12 0 0,1 12,0M12,2A10,10 0 0,0 2,12C2,14.4 2.85,16.6 4.26,18.33L18.33,4.26C16.6,2.85 14.4,2 12,2M12,22A10,10 0 0,0 22,12C22,9.6 21.15,7.4 19.74,5.67L5.67,19.74C7.4,21.15 9.6,22 12,22Z"/></svg>
<div class="t" style="left:66.00px;top:429.00px;font-size:13px;line-height:18px;color:#212121;transform-origin:0 50%;transform:scaleX(0.9762);-webkit-text-stroke:0.3px #212121;">Pi-hole</div>
<svg class="mi" style="left:15.1px;top:471.1px;width:21.8px;height:21.8px" viewBox="0 0 24 24"><path fill="#757575" d="M12,6A6,6 0 0,1 18,12C18,14.22 16.79,16.16 15,17.2V19A1,1 0 0,1 14,20H10A1,1 0 0,1 9,19V17.2C7.21,16.16 6,14.22 6,12A6,6 0 0,1 12,6M14,21V22A1,1 0 0,1 13,23H11A1,1 0 0,1 10,22V21H14M20,11H23V13H20V11M1,11H4V13H1V11M13,1V4H11V1H13M4.92,3.5L7.05,5.64L5.63,7.05L3.5,4.93L4.92,3.5M16.95,5.63L19.07,3.5L20.5,4.93L18.37,7.05L16.95,5.63Z"/></svg>
<div class="t" style="left:66.00px;top:473.00px;font-size:13px;line-height:18px;color:#212121;transform-origin:0 50%;transform:scaleX(0.9195);-webkit-text-stroke:0.3px #212121;">SonWEB</div>
<svg class="mi" style="left:15.1px;top:515.1px;width:21.8px;height:21.8px" viewBox="0 0 24 24"><path fill="#757575" d="M20,19V7H4V19H20M20,3A2,2 0 0,1 22,5V19A2,2 0 0,1 20,21H4A2,2 0 0,1 2,19V5C2,3.89 2.9,3 4,3H20M13,17V15H18V17H13M9.58,13L5.57,9H8.4L11.7,12.3C12.09,12.69 12.09,13.33 11.7,13.72L8.42,17H5.59L9.58,13Z"/></svg>
<div class="t" style="left:66.00px;top:517.00px;font-size:13px;line-height:18px;color:#212121;transform-origin:0 50%;transform:scaleX(1.0179);-webkit-text-stroke:0.3px #212121;">Terminal</div>
<svg class="mi" style="left:15.1px;top:559.1px;width:21.8px;height:21.8px" viewBox="0 0 24 24"><path fill="#757575" d="M12,15.5A3.5,3.5 0 0,1 8.5,12A3.5,3.5 0 0,1 12,8.5A3.5,3.5 0 0,1 15.5,12A3.5,3.5 0 0,1 12,15.5M19.43,12.97C19.47,12.65 19.5,12.33 19.5,12C19.5,11.67 19.47,11.34 19.43,11L21.54,9.37C21.73,9.22 21.78,8.95 21.66,8.73L19.66,5.27C19.54,5.05 19.27,4.96 19.05,5.05L16.56,6.05C16.04,5.66 15.5,5.32 14.87,5.07L14.5,2.42C14.46,2.18 14.25,2 14,2H10C9.75,2 9.54,2.18 9.5,2.42L9.13,5.07C8.5,5.32 7.96,5.66 7.44,6.05L4.95,5.05C4.73,4.96 4.46,5.05 4.34,5.27L2.34,8.73C2.21,8.95 2.27,9.22 2.46,9.37L4.57,11C4.53,11.34 4.5,11.67 4.5,12C4.5,12.33 4.53,12.65 4.57,12.97L2.46,14.63C2.27,14.78 2.21,15.05 2.34,15.27L4.34,18.73C4.46,18.95 4.73,19.03 4.95,18.95L7.44,17.94C7.96,18.34 8.5,18.68 9.13,18.93L9.5,21.58C9.54,21.82 9.75,22 10,22H14C14.25,22 14.46,21.82 14.5,21.58L14.87,18.93C15.5,18.67 16.04,18.34 16.56,17.94L19.05,18.95C19.27,19.03 19.54,18.95 19.66,18.73L21.66,15.27C21.78,15.05 21.73,14.78 21.54,14.63L19.43,12.97Z"/></svg>
<div class="t" style="left:66.00px;top:561.00px;font-size:13px;line-height:18px;color:#212121;-webkit-text-stroke:0.3px #212121;">Configuration</div>
<svg class="mi" style="left:15.1px;top:616.7px;width:21.8px;height:21.8px" viewBox="0 0 24 24"><path fill="#757575" d="M19,3H5C3.89,3 3,3.89 3,5V9H5V5H19V19H5V15H3V19A2,2 0 0,0 5,21H19A2,2 0 0,0 21,19V5C21,3.89 20.1,3 19,3M10.08,15.58L11.5,17L16.5,12L11.5,7L10.08,8.41L12.67,11H3V13H12.67L10.08,15.58Z"/></svg>
<div class="t" style="left:66.00px;top:619.60px;font-size:13px;line-height:18px;color:#212121;transform-origin:0 50%;transform:scaleX(0.9915);-webkit-text-stroke:0.3px #212121;">Log out</div>
<div id="sbd"></div>
<div class="t" style="left:15.00px;top:671.80px;font-size:13px;line-height:18px;color:#212121;transform-origin:0 50%;transform:scaleX(0.9798);-webkit-text-stroke:0.3px #212121;">Developer tools</div>
<svg class="mi" style="left:16px;top:710px;width:20px;height:20px" viewBox="0 0 24 24"><path fill="#757575" d="M12,0C8.96,0 6.21,1.23 4.22,3.22L5.63,4.63C7.26,3 9.5,2 12,2C14.5,2 16.74,3 18.36,4.64L19.77,3.23C17.79,1.23 15.04,0 12,0M7.05,6.05L8.46,7.46C9.37,6.56 10.62,6 12,6C13.38,6 14.63,6.56 15.54,7.46L16.95,6.05C15.68,4.78 13.93,4 12,4C10.07,4 8.32,4.78 7.05,6.05M12,15A2,2 0 0,1 10,13A2,2 0 0,1 12,11A2,2 0 0,1 14,13A2,2 0 0,1 12,15M15,9H9A1,1 0 0,0 8,10V22A1,1 0 0,0 9,23H15A1,1 0 0,0 16,22V10A1,1 0 0,0 15,9Z"/></svg>
<svg class="mi" style="left:60px;top:709px;width:22px;height:22px" viewBox="0 0 24 24"><path fill="#757575" d="M14.6,16.6L19.2,12L14.6,7.4L16,6L22,12L16,18L14.6,16.6M9.4,16.6L4.8,12L9.4,7.4L8,6L2,12L8,18L9.4,16.6Z"/></svg>
<svg class="mi" style="left:106px;top:709px;width:22px;height:22px" viewBox="0 0 24 24"><path fill="#757575" d="M12,10A2,2 0 0,1 14,12C14,12.5 13.82,12.94 13.53,13.29L16.7,22H14.57L12,14.93L9.43,22H7.3L10.47,13.29C10.18,12.94 10,12.5 10,12A2,2 0 0,1 12,10M12,8A4,4 0 0,0 8,12C8,12.5 8.1,13 8.28,13.46L7.4,15.86C6.53,14.81 6,13.47 6,12A6,6 0 0,1 12,6A6,6 0 0,1 18,12C18,13.47 17.47,14.81 16.6,15.86L15.72,13.46C15.9,13 16,12.5 16,12A4,4 0 0,0 12,8M12,4A8,8 0 0,0 4,12C4,14.36 5,16.5 6.64,17.94L5.92,19.94C3.54,18.11 2,15.23 2,12A10,10 0 0,1 12,2A10,10 0 0,1 22,12C22,15.23 20.46,18.11 18.08,19.94L17.36,17.94C19,16.5 20,14.36 20,12A8,8 0 0,0 12,4Z"/></svg>
<svg class="mi" style="left:151.5px;top:709.5px;width:21px;height:21px" viewBox="0 0 24 24"><path fill="#757575" d="M13,9H18.5L13,3.5V9M6,2H14L20,8V20A2,2 0 0,1 18,22H6C4.89,22 4,21.1 4,20V4C4,2.89 4.89,2 6,2M6.12,15.5L9.86,19.24L11.28,17.83L8.95,15.5L11.28,13.17L9.86,11.76L6.12,15.5M17.28,15.5L13.54,11.76L12.12,13.17L14.45,15.5L12.12,17.83L13.54,19.24L17.28,15.5Z"/></svg>
<svg class="mi" style="left:196px;top:709px;width:22px;height:22px" viewBox="0 0 24 24"><path fill="#757575" d="M11,9H13V7H11M12,20C7.59,20 4,16.41 4,12C4,7.59 7.59,4 12,4C16.41,4 20,7.59 20,12C20,16.41 16.41,20 12,20M12,2A10,10 0 0,0 2,12A10,10 0 0,0 12,22A10,10 0 0,0 22,12A10,10 0 0,0 12,2M11,17H13V11H11V17Z"/></svg>
</div>
</body></html>
